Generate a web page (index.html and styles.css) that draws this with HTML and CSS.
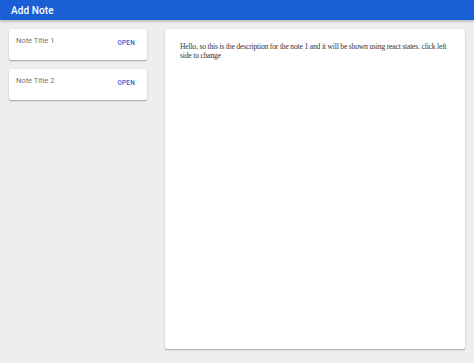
FILE: index.html
```html
<!DOCTYPE html>
<html>
<head>
<meta charset="utf-8">
<link rel="stylesheet" href="styles.css">
</head>
<body>
<header class="appbar"><span class="app-title">Add Note</span></header>
<main class="content">
  <section class="list">
    <div class="card note">
      <span class="note-title">Note Title 1</span>
      <button class="open-btn">OPEN</button>
    </div>
    <div class="card note">
      <span class="note-title">Note Title 2</span>
      <button class="open-btn">OPEN</button>
    </div>
  </section>
  <section class="card detail">
    <p class="desc">Hello, so this is the description for the note 1 and it will be shown using react states. click left side to change</p>
  </section>
</main>
</body>
</html>
```
FILE: styles.css
```css
html, body { margin: 0; padding: 0; }
body {
  background: #eeeeee;
  width: 474px;
  height: 363px;
  overflow: hidden;
  display: flex;
  flex-direction: column;
}
.appbar {
  height: 20px;
  background: #1a5fd6;
  display: flex;
  align-items: center;
  padding-left: 11px;
  box-shadow: 0 1px 3px rgba(0,0,0,0.3);
  position: relative;
  z-index: 1;
}
.app-title {
  color: #fff;
  font-family: Roboto, "Liberation Sans", sans-serif;
  font-weight: 500;
  font-size: 10px;
  letter-spacing: 0.1px;
}
.content {
  flex: 1;
  display: flex;
  gap: 18px;
  padding: 9px 9px 14px 9px;
  min-height: 0;
}
.list {
  width: 138px;
  display: flex;
  flex-direction: column;
  gap: 9px;
}
.card {
  background: #fff;
  border-radius: 2px;
  box-shadow: 0 1px 2px rgba(0,0,0,0.22), 0 1px 1px rgba(0,0,0,0.12);
}
.note {
  height: 31px;
  box-sizing: border-box;
  display: flex;
  justify-content: space-between;
  align-items: flex-start;
  padding: 7px 12px 0 7px;
}
.note-title {
  font-family: Roboto, "Liberation Sans", sans-serif;
  font-size: 7.5px;
  color: #757575;
  line-height: 10px;
}
.open-btn {
  border: none;
  background: none;
  padding: 0;
  margin-top: 3px;
  font-family: Roboto, "Liberation Sans", sans-serif;
  font-weight: 500;
  font-size: 6.3px;
  letter-spacing: 0.3px;
  color: #1a5fd6;
  line-height: 9px;
}
.detail {
  flex: 1;
  padding: 13px 15px;
}
.desc {
  margin: 0;
  font-family: "Liberation Serif", "Times New Roman", serif;
  font-size: 7.6px;
  letter-spacing: -0.18px;
  line-height: 9px;
  color: #333;
}
```
